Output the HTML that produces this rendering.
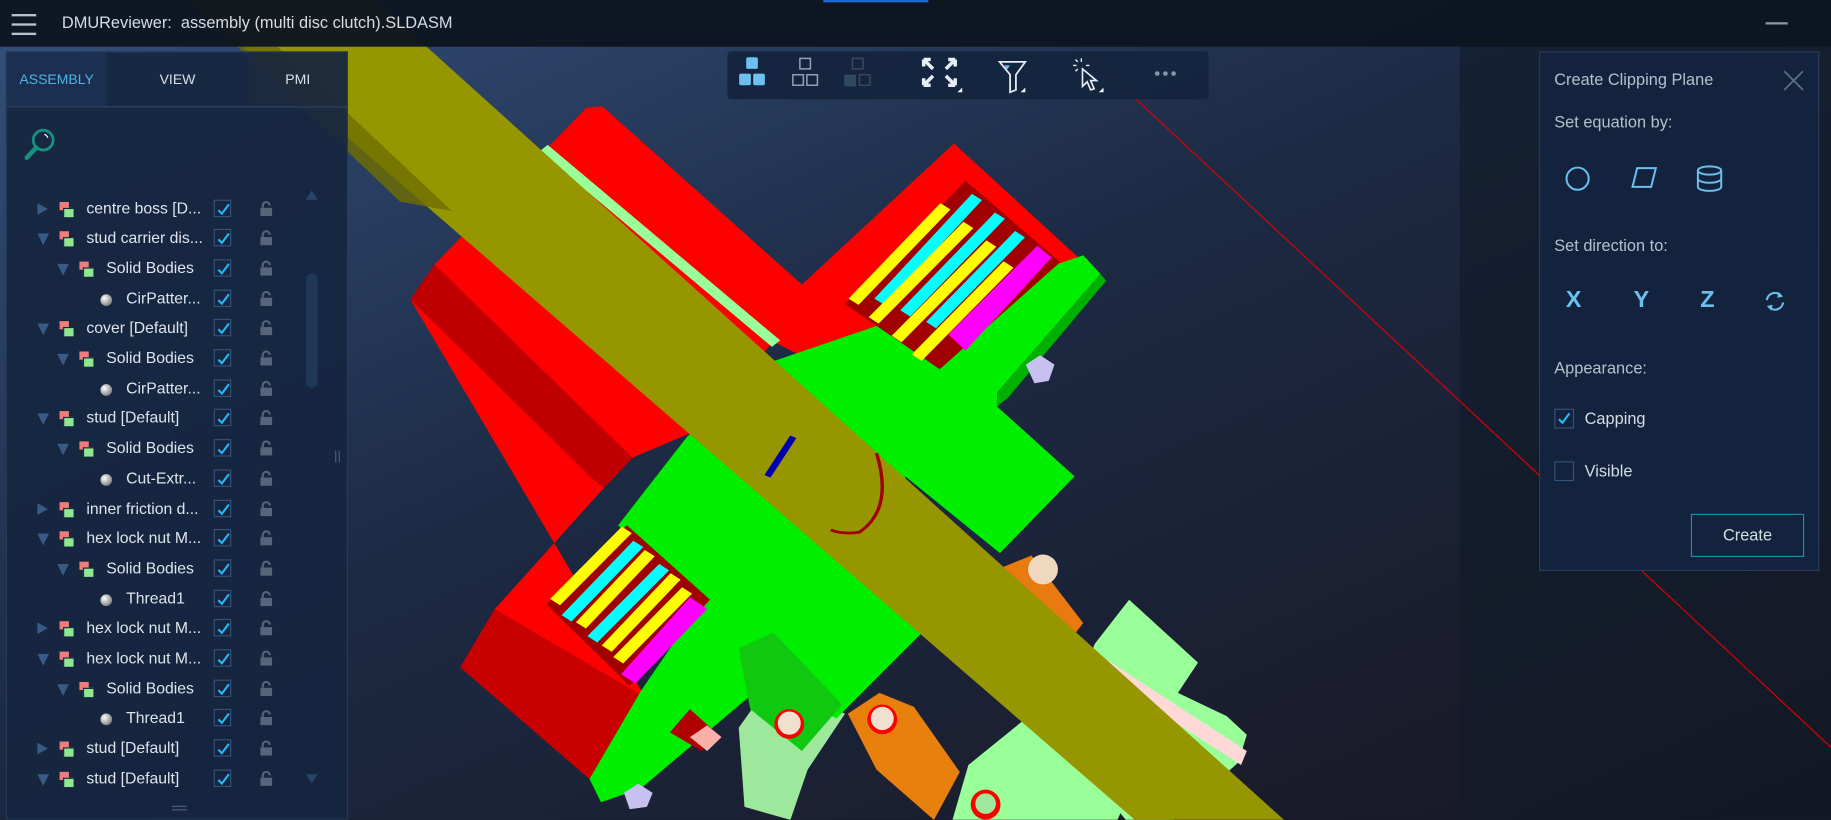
<!DOCTYPE html>
<html><head><meta charset="utf-8"><style>
html,body{margin:0;padding:0;width:1831px;height:820px;overflow:hidden;background:#141c2c;}
#w{position:absolute;left:0;top:0;width:1568px;height:702px;transform:scale(1.16773);transform-origin:0 0;font-family:"Liberation Sans",sans-serif;overflow:hidden;}
.abs{position:absolute;}
#title{left:0;top:0;width:1568px;height:40px;background:rgba(14,21,32,0.96);}
.hb{position:absolute;left:10px;width:21px;height:2px;background:#b8c2cc;}
#panel{left:5px;top:44px;width:291px;height:656px;background:rgba(22,38,64,0.93);border:1px solid #243a5a;overflow:hidden;}
.tab{position:absolute;top:0;height:46px;line-height:46px;font-size:12px;color:#d8e0e8;text-align:center;}
.row{position:absolute;left:0;height:25px;width:290px;font-size:13.5px;color:#dde4ec;}
.tri{position:absolute;top:7px;width:0;height:0;}
.tri.r{border-top:5px solid transparent;border-bottom:5px solid transparent;border-left:9px solid #3a5a86;}
.tri.d{border-left:5px solid transparent;border-right:5px solid transparent;border-top:10px solid #3a5a86;top:8px;}
.asm{position:absolute;top:6px;width:12px;height:12px;}
.asm:before{content:"";position:absolute;left:0;top:0;width:8px;height:7px;background:#f07c7c;}
.asm:after{content:"";position:absolute;left:3px;top:5px;width:8px;height:7px;background:#8fe88f;border-top:1px solid #162640;border-left:1px solid #162640;}
.sph{position:absolute;top:8px;width:10px;height:10px;border-radius:50%;background:radial-gradient(circle at 35% 35%,#fff,#aaa 50%,#555);}
.txt{position:absolute;top:4px;white-space:nowrap;}
.cb{position:absolute;left:178px;top:4px;width:15px;height:15px;border:1px solid #34527a;box-sizing:border-box;}
.cb svg{position:absolute;left:1px;top:1px;}
.lk{position:absolute;left:217px;top:5px;}
#tb{left:623px;top:44px;width:412px;height:41px;background:rgba(20,36,62,0.92);border-radius:3px;}
#clip{left:1318px;top:44px;width:240px;height:445px;background:#13233d;border:1px solid #2a3d58;box-sizing:border-box;color:#b4c0cc;font-size:14px;}
#clip .l{position:absolute;left:12px;}
</style></head><body><div id="w">
<svg class="abs" style="left:0;top:0" width="1568" height="702" viewBox="0 0 1568 702">
<defs>
<linearGradient id="bg" x1="0" y1="0" x2="1" y2="1">
<stop offset="0" stop-color="#34507a"/><stop offset="0.45" stop-color="#1c2a44"/><stop offset="1" stop-color="#1a1520"/>
</linearGradient>
</defs>
<rect width="1568" height="702" fill="url(#bg)"/>
<rect x="1250" y="0" width="318" height="702" fill="#111a28" opacity="0.6"/>
<line x1="930" y1="45" x2="1568" y2="640" stroke="#d00" stroke-width="1"/>
<g transform="translate(342.6,77) scale(0.4916,0.3987)">
<polygon points="1210,1190 1270,1095 1390,1230 1355,1295 1440,1345 1475,1385 1460,1445 1300,1620 1150,1400" fill="#99ff99"/>
<polygon points="1195,1195 1475,1420 1465,1450 1190,1230" fill="#ffd8d8"/>
<polygon points="950,1620 990,1450 1095,1345 1260,1540 1200,1700" fill="#99ff99"/>
<polygon points="1050,1025 1100,1000 1190,1145 1165,1185 1080,1090" fill="#e87a10"/>
<ellipse cx="1120" cy="1030" rx="26" ry="32" fill="#f0d8c0"/>
<polygon points="780,1340 835,1295 895,1325 975,1465 930,1568 830,1460" fill="#e8800e"/>
<polygon points="590,1370 650,1265 775,1340 710,1460 680,1568 600,1540" fill="#9de89d"/>
<polygon points="18,450 60,375 325,38 352,35 700,418 965,115 1180,358 900,700 650,540 520,730 405,790 355,855 165,1115 105,1240 330,1480 425,1300" fill="#ff0000"/>
<polygon points="18,450 60,375 405,790 355,855 330,830" fill="#c00000"/>
<polygon points="105,1240 165,1115 420,1300 330,1480" fill="#c80000"/>
<polygon points="645,585 1190,355 1220,395 1040,650 1040,680 1175,830 1045,995 880,830 910,1165 760,1350 640,1270 420,1500 350,1530 330,1480 420,1290 520,1110 380,935 500,745 530,710" fill="#00ee00"/>
<polygon points="1220,395 1040,650 1040,680 1060,660 1230,410" fill="#00b000"/>
<polygon points="590,1200 650,1165 770,1320 700,1420 610,1330" fill="#10c810"/>
<polygon points="775,460 985,195 1150,370 940,600" fill="#a00000"/>
<g stroke-width="22">
<line x1="790" y1="455" x2="950" y2="250" stroke="#ffff00"/>
<line x1="835" y1="455" x2="1005" y2="230" stroke="#00ffff"/>
<line x1="825" y1="495" x2="990" y2="290" stroke="#ffff00"/>
<line x1="880" y1="480" x2="1045" y2="270" stroke="#00ffff"/>
<line x1="865" y1="535" x2="1030" y2="330" stroke="#ffff00"/>
<line x1="925" y1="505" x2="1080" y2="310" stroke="#00ffff"/>
<line x1="900" y1="575" x2="1060" y2="375" stroke="#ffff00"/>
</g>
<polygon points="955,525 1110,335 1135,360 985,560" fill="#ff00ff"/>
<polygon points="255,1105 395,935 540,1095 400,1280" fill="#a00000"/>
<g stroke-width="22">
<line x1="270" y1="1100" x2="395" y2="945" stroke="#ffff00"/>
<line x1="290" y1="1135" x2="415" y2="975" stroke="#00ffff"/>
<line x1="315" y1="1150" x2="435" y2="995" stroke="#ffff00"/>
<line x1="335" y1="1180" x2="460" y2="1025" stroke="#00ffff"/>
<line x1="360" y1="1200" x2="480" y2="1045" stroke="#ffff00"/>
<line x1="380" y1="1225" x2="500" y2="1075" stroke="#ffff00"/>
</g>
<polygon points="385,1255 505,1090 535,1115 410,1275" fill="#ff00ff"/>
<line x1="250" y1="125" x2="655" y2="545" stroke="#99ff99" stroke-width="20"/>
<line x1="130" y1="275" x2="515" y2="715" stroke="#99ff99" stroke-width="20"/>
<polygon points="-368,-193 -44,-193 1540,1568 1600,1700 1300,1700 1280,1568" fill="#969600"/>
<polygon points="-368,-193 -300,-193 90,260 0,240" fill="#6e6e00" opacity="0.8"/>
<path d="M830,780 Q860,900 800,950 Q770,955 750,945" stroke="#a00000" stroke-width="6" fill="none"/>
<line x1="640" y1="830" x2="685" y2="745" stroke="#0000b0" stroke-width="12"/>
<ellipse cx="678" cy="1362" rx="26" ry="32" fill="#ff0000"/><ellipse cx="678" cy="1360" rx="20" ry="25" fill="#f0e0d0"/>
<ellipse cx="840" cy="1352" rx="26" ry="32" fill="#ff0000"/><ellipse cx="840" cy="1350" rx="20" ry="25" fill="#f0e0d0"/>
<ellipse cx="1020" cy="1535" rx="26" ry="32" fill="#ff0000"/><ellipse cx="1020" cy="1533" rx="18" ry="22" fill="#9de89d"/>
<polygon points="1090,590 1115,570 1140,590 1130,625 1105,630" fill="#c8c0f0"/>
<polygon points="390,1510 415,1490 440,1510 430,1540 400,1545" fill="#c8c0f0"/>
<polygon points="470,1380 505,1330 550,1380 525,1420" fill="#b00000"/>
<polygon points="505,1390 535,1365 560,1390 535,1420" fill="#f8b0a8"/>
</g>
</svg>

<div id="title" class="abs">
<div class="hb" style="top:12px"></div><div class="hb" style="top:20px"></div><div class="hb" style="top:28px"></div>
<div class="abs" style="left:53px;top:11px;font-size:14px;color:#d4dce4;white-space:nowrap">DMUReviewer:&nbsp; assembly (multi disc clutch).SLDASM</div>
<div class="abs" style="left:1512px;top:19px;width:19px;height:2px;background:#8a949e"></div>
<div class="abs" style="left:705px;top:0;width:90px;height:2px;background:#1a6ad0"></div>
</div>

<div id="panel" class="abs">
<div class="tab" style="left:0;width:85px;background:#1b3050;color:#4db3e6;">ASSEMBLY</div>
<div class="tab" style="left:85px;width:122px">VIEW</div>
<div class="tab" style="left:207px;width:84px;background:rgba(30,44,60,0.6)">PMI</div>
<div class="abs" style="left:0;top:46px;width:291px;height:1px;background:#2c4466"></div>
<svg class="abs" style="left:13px;top:63px" width="30" height="32"><circle cx="18" cy="12" r="8.5" fill="none" stroke="#189080" stroke-width="2.4"/><line x1="12" y1="18.5" x2="4" y2="27" stroke="#189080" stroke-width="4" stroke-linecap="round"/><path d="M19 7 A5 5 0 0 1 22 10" stroke="#fff" stroke-width="1" fill="none"/></svg>
<div class="abs" style="left:256px;top:118px;width:0;height:0;border-left:5px solid transparent;border-right:5px solid transparent;border-bottom:8px solid #2a4468"></div>
<div class="abs" style="left:256px;top:618px;width:0;height:0;border-left:5px solid transparent;border-right:5px solid transparent;border-top:8px solid #2a4468"></div>
<div class="abs" style="left:256px;top:189px;width:10px;height:98px;border-radius:5px;background:#1f3858"></div>
<div class="abs" style="left:281px;top:341px;width:1px;height:10px;background:#4a6080;box-shadow:3px 0 #4a6080"></div>
<div class="abs" style="left:141px;top:645px;width:13px;height:1px;background:#4a6080;box-shadow:0 3px #4a6080"></div>
</div>

<div id="tree" class="abs" style="left:5px;top:0;"></div>

<div id="tb" class="abs">
<svg width="412" height="41">
<rect x="16" y="5" width="10" height="10" rx="1.5" fill="#6ec0f0"/><rect x="10" y="19" width="10" height="10" rx="1.5" fill="#6ec0f0"/><rect x="22" y="19" width="10" height="10" rx="1.5" fill="#6ec0f0"/>
<g fill="none" stroke="#8fa0b0" stroke-width="1.3"><rect x="62" y="6" width="9" height="9"/><rect x="56" y="20" width="9" height="9"/><rect x="68" y="20" width="9" height="9"/></g>
<g fill="none" stroke="#37485a" stroke-width="1.3"><rect x="107" y="6" width="9" height="9"/><rect x="113" y="20" width="9" height="9"/></g>
<rect x="100" y="20" width="10" height="10" fill="#2f4a60"/>
<g stroke="#e6eef6" stroke-width="3" fill="#e6eef6">
<path d="M168 7 L176 15 M168 7 L174 7 M168 7 L168 13" /><path d="M187 15 L195 7 M189 7 L195 7 M195 7 L195 13"/>
<path d="M168 29 L176 21 M168 29 L168 23 M168 29 L174 29"/><path d="M187 21 L195 29 M195 29 L189 29 M195 29 L195 23"/>
</g>
<path d="M197 35 L201 31 L201 35Z" fill="#fff"/>
<path d="M233 9 L255 9 L247 20 L247 33 L242 35 L242 20 Z" fill="none" stroke="#e6eef6" stroke-width="1.5"/>
<path d="M237 12 L242 12 L239 16Z" fill="#6ec0f0"/>
<path d="M251 35 L255 31 L255 35Z" fill="#fff"/>
<g stroke="#e6eef6" stroke-width="1.2"><line x1="303" y1="6" x2="303" y2="9"/><line x1="296" y1="12" x2="299" y2="12"/><line x1="307" y1="12" x2="310" y2="12"/><line x1="298" y1="7" x2="300" y2="9"/><line x1="298" y1="17" x2="300" y2="15"/></g>
<path d="M304 15 L304 30 L308 26 L311 33 L314 32 L311 25 L316 25 Z" fill="none" stroke="#e6eef6" stroke-width="1.4"/>
<path d="M318 35 L322 31 L322 35Z" fill="#fff"/>
<circle cx="368" cy="19" r="2" fill="#8094aa"/><circle cx="375" cy="19" r="2" fill="#8094aa"/><circle cx="382" cy="19" r="2" fill="#8094aa"/>
</svg>
</div>

<div id="clip" class="abs">
<div class="l" style="top:15px">Create Clipping Plane</div>
<svg class="abs" style="left:208px;top:15px" width="18" height="18"><path d="M1 1 L17 17 M17 1 L1 17" stroke="#5a7080" stroke-width="1.5"/></svg>
<div class="l" style="top:51px">Set equation by:</div>
<svg class="abs" style="left:20px;top:96px" width="200" height="24">
<circle cx="12" cy="12" r="9.5" fill="none" stroke="#6cc0ee" stroke-width="1.7"/>
<path d="M63 3 L79 3 L75 19 L59 19 Z" fill="none" stroke="#6cc0ee" stroke-width="1.7"/>
<g fill="none" stroke="#6cc0ee" stroke-width="1.7"><ellipse cx="125" cy="5" rx="10" ry="3.5"/><path d="M115 5 L115 19 A10 3.5 0 0 0 135 19 L135 5"/><path d="M115 12 A10 3.5 0 0 0 135 12"/></g>
</svg>
<div class="l" style="top:157px">Set direction to:</div>
<div class="abs" style="left:22px;top:201px;font-size:20px;color:#6cc0ee;font-weight:bold">X</div>
<div class="abs" style="left:80px;top:201px;font-size:20px;color:#6cc0ee;font-weight:bold">Y</div>
<div class="abs" style="left:137px;top:201px;font-size:20px;color:#6cc0ee;font-weight:bold">Z</div>
<svg class="abs" style="left:190px;top:202px" width="22" height="22"><path d="M4 10 A7 7 0 0 1 16 6 M18 12 A7 7 0 0 1 6 16" fill="none" stroke="#6cc0ee" stroke-width="1.8"/><path d="M14 3 L18 7 L13 8Z M8 19 L4 15 L9 14Z" fill="#6cc0ee"/></svg>
<div class="l" style="top:262px">Appearance:</div>
<div class="abs" style="left:12px;top:305px;width:17px;height:17px;border:1px solid #34527a;box-sizing:border-box"><svg width="15" height="15"><path d="M3 8 L6 11 L12 3" fill="none" stroke="#29b6f6" stroke-width="1.8"/></svg></div>
<div class="abs" style="left:38px;top:305px;color:#d4dce4">Capping</div>
<div class="abs" style="left:12px;top:350px;width:17px;height:17px;border:1px solid #34527a;box-sizing:border-box"></div>
<div class="abs" style="left:38px;top:350px;color:#d4dce4">Visible</div>
<div class="abs" style="left:129px;top:395px;width:97px;height:37px;border:1px solid #1e8ab8;box-sizing:border-box;text-align:center;line-height:35px;color:#d4dce4">Create</div>
</div>
</div>
<script>
var rows=[[0,'r','a','centre boss [D...'],[0,'d','a','stud carrier dis...'],[1,'d','a','Solid Bodies'],[2,'','s','CirPatter...'],[0,'d','a','cover [Default]'],[1,'d','a','Solid Bodies'],[2,'','s','CirPatter...'],[0,'d','a','stud [Default]'],[1,'d','a','Solid Bodies'],[2,'','s','Cut-Extr...'],[0,'r','a','inner friction d...'],[0,'d','a','hex lock nut M...'],[1,'d','a','Solid Bodies'],[2,'','s','Thread1'],[0,'r','a','hex lock nut M...'],[0,'d','a','hex lock nut M...'],[1,'d','a','Solid Bodies'],[2,'','s','Thread1'],[0,'r','a','stud [Default]'],[0,'d','a','stud [Default]']];
var h='';
rows.forEach(function(r,i){var y=166.5+i*25.7;var ind=r[0]*17;
h+='<div class="row" style="top:'+y+'px">';
if(r[1])h+='<div class="tri '+r[1]+'" style="left:'+(27+ind)+'px"></div>';
if(r[2]=='a')h+='<div class="asm" style="left:'+(46+ind)+'px"></div>';else h+='<div class="sph" style="left:81px"></div>';
h+='<div class="txt" style="left:'+(r[2]=='a'?69+ind:103)+'px">'+r[3]+'</div>';
h+='<div class="cb"><svg width="13" height="13"><path d="M2 7 L5 10 L11 2" fill="none" stroke="#29b6f6" stroke-width="1.8"/></svg></div>';
h+='<svg class="lk" width="12" height="14"><path d="M3 6 L3 4 A3 3 0 0 1 9 4" fill="none" stroke="#56657a" stroke-width="1.8"/><rect x="1" y="6" width="10" height="7" fill="#56657a"/></svg>';
h+='</div>';});
document.getElementById('tree').innerHTML=h;
</script>
</body></html>
